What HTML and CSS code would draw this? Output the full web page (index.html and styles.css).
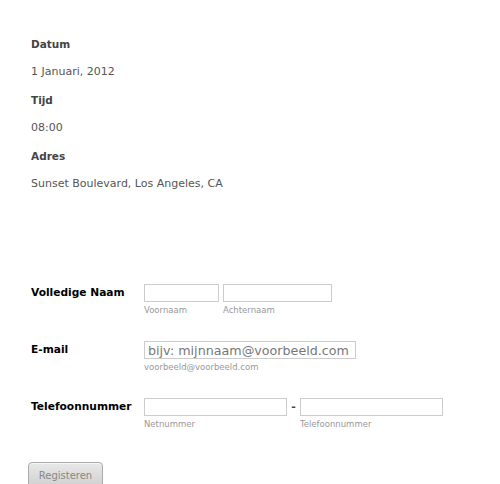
FILE: index.html
```html
<!DOCTYPE html>
<html>
<head>
<meta charset="utf-8">
<link rel="stylesheet" href="styles.css">
</head>
<body>
<div class="page">
  <div class="info">
    <div class="info-label">Datum</div>
    <div class="info-value">1 Januari, 2012</div>
    <div class="info-label">Tijd</div>
    <div class="info-value">08:00</div>
    <div class="info-label">Adres</div>
    <div class="info-value">Sunset Boulevard, Los Angeles, CA</div>
  </div>
  <form class="form">
    <div class="row">
      <div class="label">Volledige Naam</div>
      <div class="fields">
        <div class="field">
          <input class="input w-first" type="text">
          <div class="sub">Voornaam</div>
        </div>
        <div class="field">
          <input class="input w-last" type="text">
          <div class="sub">Achternaam</div>
        </div>
      </div>
    </div>
    <div class="row">
      <div class="label">E-mail</div>
      <div class="fields">
        <div class="field">
          <input class="input w-email" type="text" placeholder="bijv: mijnnaam@voorbeeld.com">
          <div class="sub">voorbeeld@voorbeeld.com</div>
        </div>
      </div>
    </div>
    <div class="row">
      <div class="label">Telefoonnummer</div>
      <div class="fields">
        <div class="field">
          <input class="input w-phone" type="text">
          <div class="sub">Netnummer</div>
        </div>
        <div class="dash">-</div>
        <div class="field">
          <input class="input w-phone" type="text">
          <div class="sub">Telefoonnummer</div>
        </div>
      </div>
    </div>
    <div class="actions">
      <button class="btn" type="button">Registeren</button>
    </div>
  </form>
</div>
</body>
</html>
```
FILE: styles.css
```css
html, body {
  margin: 0;
  padding: 0;
  background: #fff;
}
body {
  font-family: "DejaVu Sans", Verdana, sans-serif;
  height: 484px;
  overflow: hidden;
}
.page {
  padding: 30px 0 0 31px;
}
.info-label {
  font-size: 10.5px;
  font-weight: bold;
  color: #444;
  line-height: 28px;
}
.info-value {
  font-size: 11px;
  color: #555;
  line-height: 28px;
}
.form {
  margin-top: 86px;
}
.row {
  display: flex;
  height: 57px;
}
.label {
  width: 113px;
  font-size: 10.65px;
  font-weight: bold;
  color: #000;
  line-height: 18px;
}
.fields {
  display: flex;
  align-items: flex-start;
}
.field {
  display: flex;
  flex-direction: column;
  margin-right: 4px;
}
.input {
  box-sizing: border-box;
  height: 18px;
  margin: 0;
  padding: 0 3px;
  border: 1px solid #ccc;
  background: #fff;
  font-family: "DejaVu Sans", Verdana, sans-serif;
  font-size: 12.7px;
  color: #555;
  outline: none;
}
.input::placeholder {
  color: #777;
}
.w-first { width: 75px; }
.w-last { width: 109px; }
.w-email { width: 212px; }
.w-phone { width: 143px; }
.sub {
  font-size: 8.5px;
  color: #999;
  line-height: 12px;
  margin-top: 2px;
}
.dash {
  font-size: 11px;
  font-weight: bold;
  color: #444;
  line-height: 18px;
  width: 5px;
  text-align: center;
  margin-right: 4px;
}
.actions {
  margin-left: -3px;
  margin-top: 7px;
}
.btn {
  width: 75px;
  height: 26px;
  border: 1px solid #aaa;
  border-radius: 4px;
  background: linear-gradient(#e8e8e8, #d0d0d0);
  font-family: "DejaVu Sans", Verdana, sans-serif;
  font-size: 10px;
  color: #888;
  padding: 0;
  box-shadow: inset 0 1px 0 #f6f6f6;
}
```
